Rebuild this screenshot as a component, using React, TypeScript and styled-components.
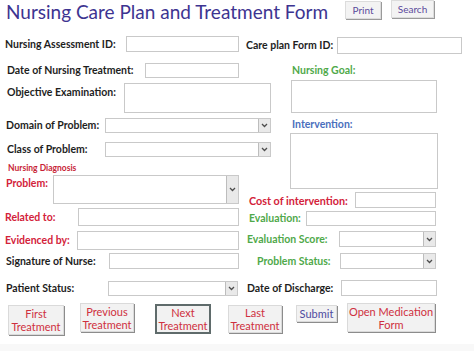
import React from "react";
import styled, { createGlobalStyle } from "styled-components";

const GlobalStyle = createGlobalStyle`
  html, body {
    margin: 0;
    padding: 0;
    background: #ffffff;
    font-family: Lato, "Open Sans", sans-serif;
  }
`;

const Page = styled.div`
  width: 474px;
  height: 351px;
  overflow: hidden;
  position: relative;
  background: #ffffff;
`;

const Header = styled.div`
  display: flex;
  align-items: flex-start;
  height: 36px;
  padding-left: 6px;
`;

const Title = styled.h1`
  margin: 0;
  width: 339px;
  font-size: 19px;
  line-height: 24px;
  font-weight: 400;
  color: #3d3491;
  white-space: nowrap;
`;

const TopButton = styled.button<{ $w: number; $mt: number; $ml?: number }>`
  width: ${(p) => p.$w}px;
  height: 18px;
  margin-top: ${(p) => p.$mt}px;
  margin-left: ${(p) => p.$ml ?? 0}px;
  padding: 0;
  font-family: inherit;
  font-size: 10px;
  color: #5b4a9c;
  background: #f3f3f3;
  border: 1px solid #dcdcdc;
  box-shadow: 1px 1px 0 #9a9a9a;
`;

const Body = styled.div`
  display: flex;
  align-items: flex-start;
`;

const LeftCol = styled.div`
  width: 242px;
  display: flex;
  flex-direction: column;
`;

const RightCol = styled.div`
  flex: 1;
  display: flex;
  flex-direction: column;
`;

const Row = styled.div<{ $mt: number; $pl: number; $h: number; $top?: boolean }>`
  display: flex;
  align-items: ${(p) => (p.$top ? "flex-start" : "center")};
  margin-top: ${(p) => p.$mt}px;
  padding-left: ${(p) => p.$pl}px;
  height: ${(p) => p.$h}px;
`;

type Tone = "black" | "red" | "green" | "blue";

const toneColor: Record<Tone, string> = {
  black: "#1e1e1e",
  red: "#d3223a",
  green: "#4fa94a",
  blue: "#4a6fbd",
};

const Label = styled.span<{ $w?: number; $tone?: Tone; $mt?: number; $size?: number }>`
  flex: none;
  width: ${(p) => (p.$w ? `${p.$w}px` : "auto")};
  margin-top: ${(p) => p.$mt ?? 0}px;
  font-size: ${(p) => p.$size ?? 10.5}px;
  line-height: 13px;
  font-weight: 700;
  color: ${(p) => toneColor[p.$tone ?? "black"]};
  white-space: nowrap;
`;

const SmallHeading = styled.div`
  margin-top: 6px;
  padding-left: 8px;
  height: 11px;
  font-size: 8.5px;
  line-height: 11px;
  font-weight: 700;
  color: #c81e36;
`;

const Field = styled.div<{ $w: number; $h: number }>`
  flex: none;
  width: ${(p) => p.$w}px;
  height: ${(p) => p.$h}px;
  box-sizing: border-box;
  background: #ffffff;
  border: 1px solid #c9c9c9;
`;

const SelectBox = styled(Field)`
  display: flex;
  justify-content: flex-end;
`;

const ArrowBox = styled.div`
  width: 12px;
  height: 100%;
  box-sizing: border-box;
  display: flex;
  align-items: center;
  justify-content: center;
  background: #e9e9e9;
  border-left: 1px solid #bdbdbd;
`;

const Block = styled.div<{ $mt: number; $pl: number }>`
  margin-top: ${(p) => p.$mt}px;
  padding-left: ${(p) => p.$pl}px;
`;

const ButtonRow = styled.div`
  display: flex;
  align-items: flex-start;
  margin-top: 7px;
  padding-left: 8px;
`;

const NavButton = styled.button<{
  $w: number;
  $h: number;
  $mt: number;
  $ml: number;
  $focused?: boolean;
  $blue?: boolean;
}>`
  flex: none;
  width: ${(p) => p.$w}px;
  height: ${(p) => p.$h}px;
  margin-top: ${(p) => p.$mt}px;
  margin-left: ${(p) => p.$ml}px;
  padding: 0;
  box-sizing: border-box;
  font-family: inherit;
  font-size: 11px;
  line-height: 13px;
  color: ${(p) => (p.$blue ? "#4f4aa0" : "#cf3040")};
  background: #f2f2f2;
  border: ${(p) => (p.$focused ? "2px solid #5f6b6b" : "1px solid #dadada")};
  box-shadow: ${(p) => (p.$focused ? "none" : "1px 1px 0 #8c8c8c")};
  text-align: center;
  white-space: nowrap;
`;

const Footer = styled.div`
  position: absolute;
  left: 0;
  right: 0;
  bottom: 0;
  height: 7px;
  background: #f8f8f8;
`;

const Chevron = () => (
  <svg width="7" height="5" viewBox="0 0 7 5">
    <polyline points="1,1 3.5,3.5 6,1" fill="none" stroke="#4d4d4d" strokeWidth="1.3" />
  </svg>
);

const Select = ({ w, h }: { w: number; h: number }) => (
  <SelectBox $w={w} $h={h}>
    <ArrowBox>
      <Chevron />
    </ArrowBox>
  </SelectBox>
);

export default function App() {
  return (
    <Page>
      <GlobalStyle />
      <Header>
        <Title>Nursing Care Plan and Treatment Form</Title>
        <TopButton $w={36} $mt={1}>Print</TopButton>
        <TopButton $w={43} $mt={0} $ml={10}>Search</TopButton>
      </Header>

      <Body>
        <LeftCol>
          <Row $mt={0} $pl={5} $h={16}>
            <Label $w={121}>Nursing Assessment ID:</Label>
            <Field $w={113} $h={16} />
          </Row>
          <Row $mt={11} $pl={7} $h={15}>
            <Label $w={138}>Date of Nursing Treatment:</Label>
            <Field $w={94} $h={15} />
          </Row>
          <Row $mt={5} $pl={7} $h={30} $top>
            <Label $w={117} $mt={3}>Objective Examination:</Label>
            <Field $w={147} $h={30} />
          </Row>
          <Row $mt={5} $pl={6} $h={15}>
            <Label $w={99}>Domain of Problem:</Label>
            <Select w={166} h={15} />
          </Row>
          <Row $mt={9} $pl={7} $h={15}>
            <Label $w={98}>Class of Problem:</Label>
            <Select w={166} h={15} />
          </Row>
          <SmallHeading>Nursing Diagnosis</SmallHeading>
          <Row $mt={1} $pl={6} $h={29} $top>
            <Label $w={47} $mt={2} $tone="red">Problem:</Label>
            <Select w={186} h={29} />
          </Row>
          <Row $mt={4} $pl={5} $h={18}>
            <Label $w={73} $tone="red">Related to:</Label>
            <Field $w={161} $h={18} />
          </Row>
          <Row $mt={5} $pl={5} $h={19}>
            <Label $w={72} $tone="red">Evidenced by:</Label>
            <Field $w={162} $h={19} />
          </Row>
          <Row $mt={3} $pl={6} $h={16}>
            <Label $w={103}>Signature of Nurse:</Label>
            <Field $w={130} $h={16} />
          </Row>
          <Row $mt={12} $pl={6} $h={15}>
            <Label $w={102}>Patient Status:</Label>
            <Select w={130} h={15} />
          </Row>
        </LeftCol>

        <RightCol>
          <Row $mt={1} $pl={4} $h={17}>
            <Label $w={91}>Care plan Form ID:</Label>
            <Field $w={125} $h={17} />
          </Row>
          <Row $mt={10} $pl={50} $h={12}>
            <Label $tone="green">Nursing Goal:</Label>
          </Row>
          <Block $mt={4} $pl={49}>
            <Field $w={146} $h={33} />
          </Block>
          <Row $mt={5} $pl={50} $h={12}>
            <Label $tone="blue">Intervention:</Label>
          </Row>
          <Block $mt={3} $pl={48}>
            <Field $w={148} $h={56} />
          </Block>
          <Row $mt={3} $pl={7} $h={16}>
            <Label $w={106} $tone="red" $size={10.8}>Cost of intervention:</Label>
            <Field $w={81} $h={16} />
          </Row>
          <Row $mt={3} $pl={7} $h={15}>
            <Label $w={57} $tone="green">Evaluation:</Label>
            <Field $w={130} $h={15} />
          </Row>
          <Row $mt={5} $pl={5} $h={16}>
            <Label $w={92} $tone="green">Evaluation Score:</Label>
            <Select w={97} h={16} />
          </Row>
          <Row $mt={6} $pl={15} $h={16}>
            <Label $w={83} $tone="green">Problem Status:</Label>
            <Select w={96} h={16} />
          </Row>
          <Row $mt={11} $pl={5} $h={16}>
            <Label $w={94}>Date of Discharge:</Label>
            <Field $w={96} $h={16} />
          </Row>
        </RightCol>
      </Body>

      <ButtonRow>
        <NavButton $w={56} $h={30} $mt={2} $ml={0}>
          First
          <br />
          Treatment
        </NavButton>
        <NavButton $w={54} $h={29} $mt={0} $ml={16}>
          Previous
          <br />
          Treatment
        </NavButton>
        <NavButton $w={56} $h={30} $mt={1} $ml={21} $focused>
          Next
          <br />
          Treatment
        </NavButton>
        <NavButton $w={54} $h={28} $mt={2} $ml={17}>
          Last
          <br />
          Treatment
        </NavButton>
        <NavButton $w={41} $h={17} $mt={2} $ml={14} $blue>
          Submit
        </NavButton>
        <NavButton $w={88} $h={29} $mt={0} $ml={10}>
          Open Medication
          <br />
          Form
        </NavButton>
      </ButtonRow>
      <Footer />
    </Page>
  );
}
